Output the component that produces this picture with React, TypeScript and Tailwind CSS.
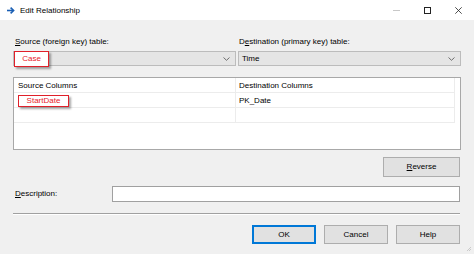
import React from "react";

const font = { fontFamily: '"Liberation Sans", Arial, sans-serif' };

function Chevron() {
  return (
    <svg width="7" height="4" viewBox="0 0 7 4" className="block">
      <path d="M0.5 0.5 L3.5 3.3 L6.5 0.5" fill="none" stroke="#606060" strokeWidth="0.9" />
    </svg>
  );
}

function Btn({ children, primary }: { children: React.ReactNode; primary?: boolean }) {
  return (
    <div
      className={
        "h-[19px] flex items-center justify-center text-[8px] text-black bg-[#e1e1e1] " +
        (primary ? "border-2 border-[#0078d7]" : "border border-[#adadad]")
      }
    >
      {children}
    </div>
  );
}

export default function App() {
  return (
    <div className="w-[474px] h-[254px] bg-[#f0f0f0] text-black overflow-hidden relative" style={font}>
      {/* Title bar */}
      <div className="h-[20px] bg-white flex items-center">
        <div className="w-[20px] flex justify-center pl-[1px]">
          <svg width="8" height="7" viewBox="0 0 8 7">
            <path d="M0 3.5 H6" stroke="#1a5fb4" strokeWidth="1.6" />
            <path d="M3.6 0.6 L6.6 3.5 L3.6 6.4" fill="none" stroke="#1a5fb4" strokeWidth="1.6" />
          </svg>
        </div>
        <div className="text-[8px] leading-none pt-[1px]">Edit Relationship</div>
        <div className="ml-auto flex items-center h-full">
          <div className="w-[31px] flex justify-center">
            <div className="w-[7px] h-[1px] bg-[#c8c8c8]" />
          </div>
          <div className="w-[31px] flex justify-center">
            <div className="w-[7px] h-[7px] border border-[#222]" />
          </div>
          <div className="w-[31px] flex justify-center">
            <svg width="7" height="7" viewBox="0 0 7 7">
              <path d="M0.3 0.3 L6.7 6.7 M6.7 0.3 L0.3 6.7" stroke="#222" strokeWidth="0.8" />
            </svg>
          </div>
        </div>
      </div>

      {/* Body */}
      <div className="px-[13px] flex flex-col">
        {/* Table selectors */}
        <div className="mt-[16px] flex gap-[2px]">
          <div className="w-[223px] flex flex-col">
            <div className="h-[12px] text-[8px] leading-[12px] pl-[2px]">
              <span className="underline">S</span>ource (foreign key) table:
            </div>
            <div className="mt-[3px] h-[15px] bg-[#e5e5e5] border border-[#bcbcbc] flex items-center relative">
              <div className="absolute left-0 top-[-1px] h-[16px] w-[35px] bg-white border-[1.5px] border-[#e0202a] shadow-[2px_2px_2px_rgba(0,0,0,0.35)] flex items-center justify-center text-[8px] text-[#e8202a]">
                Case
              </div>
              <div className="ml-auto mr-[5px]">
                <Chevron />
              </div>
            </div>
          </div>
          <div className="flex-1 flex flex-col">
            <div className="h-[12px] text-[8px] leading-[12px] pl-[1px]">
              D<span className="underline">e</span>stination (primary key) table:
            </div>
            <div className="mt-[3px] h-[15px] bg-[#e5e5e5] border border-[#bcbcbc] flex items-center">
              <div className="text-[8px] pl-[3px]">Time</div>
              <div className="ml-auto mr-[5px]">
                <Chevron />
              </div>
            </div>
          </div>
        </div>

        {/* Columns grid */}
        <div className="mt-[11px] h-[73px] bg-white border border-[#a8a8a8]">
          <div className="w-[441px] border-r border-[#ececec]">
            <div className="flex h-[15px] border-b border-[#ececec]">
              <div className="w-[222px] border-r border-[#ececec] text-[8px] leading-[15px] pl-[4px]">Source Columns</div>
              <div className="flex-1 text-[8px] leading-[15px] pl-[3px]">Destination Columns</div>
            </div>
            <div className="flex h-[15px] border-b border-[#ececec]">
              <div className="w-[222px] border-r border-[#ececec] relative">
                <div className="absolute left-[4px] top-[2px] w-[51px] h-[12px] bg-white border-[1.5px] border-[#e0202a] shadow-[2px_2px_2px_rgba(0,0,0,0.35)] flex items-center justify-center text-[8px] text-[#e8202a]">
                  StartDate
                </div>
              </div>
              <div className="flex-1 text-[8px] leading-[15px] pl-[3px]">PK_Date</div>
            </div>
            <div className="flex h-[15px] border-b border-[#ececec]">
              <div className="w-[222px] border-r border-[#ececec]" />
              <div className="flex-1" />
            </div>
          </div>
        </div>

        {/* Reverse */}
        <div className="mt-[7px] flex justify-end pr-[1px]">
          <div className="w-[77px]">
            <div className="h-[20px] flex items-center justify-center text-[8px] bg-[#e1e1e1] border border-[#adadad]">
              <span className="underline">R</span>everse
            </div>
          </div>
        </div>

        {/* Description */}
        <div className="mt-[9px] flex items-center pr-[1px]">
          <div className="w-[99px] text-[8px] pl-[2px]">
            <span className="underline">D</span>escription:
          </div>
          <div className="flex-1 h-[16px] bg-white border border-[#a0a0a0]" />
        </div>

        {/* Separator */}
        <div className="mt-[11px] mr-[1px] h-[2px] border-t border-[#a0a0a0] border-b border-b-white" />

        {/* Buttons */}
        <div className="mt-[10px] flex justify-end gap-[8px] pr-[1px]">
          <div className="w-[64px]">
            <Btn primary>OK</Btn>
          </div>
          <div className="w-[64px]">
            <Btn>Cancel</Btn>
          </div>
          <div className="w-[64px]">
            <Btn>Help</Btn>
          </div>
        </div>
      </div>

      {/* resize grip */}
      <svg width="6" height="6" viewBox="0 0 6 6" className="absolute right-[2px] bottom-[2px]">
        <path d="M5 1 L1 5 M5 3 L3 5" stroke="#c0c0c0" strokeWidth="0.8" />
      </svg>
    </div>
  );
}
